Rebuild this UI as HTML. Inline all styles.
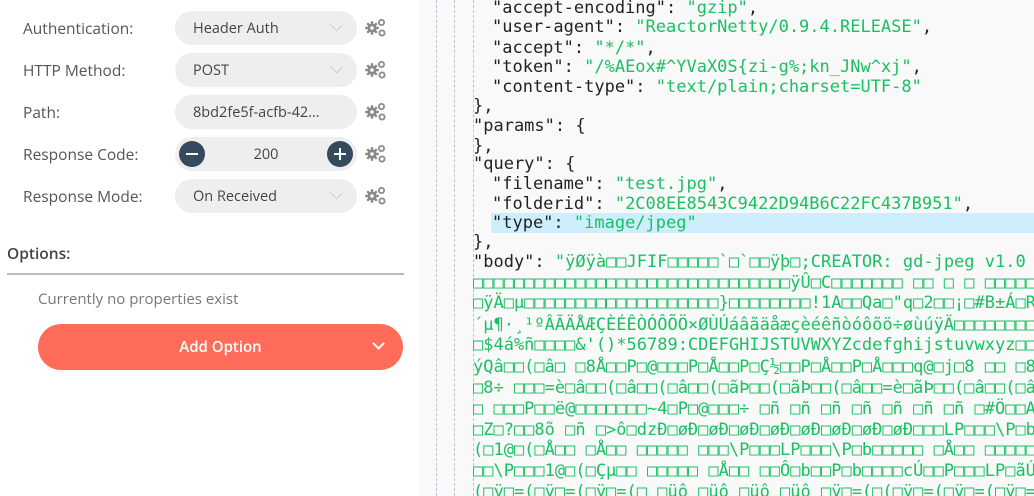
<!DOCTYPE html>
<html><head><meta charset="utf-8"><style>
*{margin:0;padding:0;box-sizing:border-box}
body{width:1034px;height:496px;overflow:hidden;background:#fff;position:relative;font-family:"Open Sans","Liberation Sans",sans-serif}
.lbl{position:absolute;left:23px;font-size:15.5px;color:#555}
.pill{position:absolute;left:175px;width:182px;height:34px;border-radius:17px;background:#eee;font-size:14.5px;color:#444;padding-left:18px;line-height:36px}
.chev{position:absolute;right:16px;top:9px;width:10px;height:10px;border-right:1px solid #ccc;border-bottom:1px solid #ccc;transform:rotate(45deg) scaleY(0.8)}
.gear{position:absolute;left:364px}
.rb{position:absolute;width:26px;height:26px;border-radius:50%;background:#354a5c;top:4px}
.rb::before{content:"";position:absolute;left:7px;top:12px;width:12px;height:2px;background:#fff}
.rb.p::after{content:"";position:absolute;left:12px;top:7px;width:2px;height:12px;background:#fff}
#right{position:absolute;left:419px;top:0;width:615px;height:496px;background:#f9f9f9}
.g{position:absolute;top:0;height:496px;width:0;border-left:1px dashed #b4c3d6}
.ln{position:absolute;left:0;font-family:"DejaVu Sans Mono","Liberation Mono",monospace;font-size:17px;color:#222;white-space:pre;line-height:20px}
.s{color:#1bc063}
</style></head><body>
<div class="lbl" style="top:17px">Authentication:</div>
<div class="lbl" style="top:59px">HTTP Method:</div>
<div class="lbl" style="top:101px">Path:</div>
<div class="lbl" style="top:143px">Response Code:</div>
<div class="lbl" style="top:185px">Response Mode:</div>

<div class="pill" style="top:11px">Header Auth<div class="chev"></div></div>
<div class="pill" style="top:53px">POST<div class="chev"></div></div>
<div class="pill" style="top:95px">8bd2fe5f-acfb-42...</div>
<div class="pill" style="top:137px;padding:0;text-align:center"><div class="rb" style="left:4px"></div>200<div class="rb p" style="right:4px"></div></div>
<div class="pill" style="top:179px">On Received<div class="chev"></div></div>

<svg width="0" height="0" style="position:absolute"><defs><g id="gr" fill="#8a8a8a">
<circle cx="8" cy="11" r="4.6"/><g stroke="#8a8a8a" stroke-width="2.4"><line x1="8" y1="4.2" x2="8" y2="17.8"/><line x1="1.2" y1="11" x2="14.8" y2="11"/><line x1="3.2" y1="6.2" x2="12.8" y2="15.8"/><line x1="12.8" y1="6.2" x2="3.2" y2="15.8"/></g><circle cx="8" cy="11" r="1.8" fill="#fff"/>
<circle cx="17.5" cy="5.5" r="2.6" fill="none" stroke="#8a8a8a" stroke-width="1.8"/><circle cx="18" cy="16" r="2.6" fill="none" stroke="#8a8a8a" stroke-width="1.8"/></g></defs></svg>
<svg class="gear" style="top:17px" width="24" height="22"><use href="#gr"/></svg>
<svg class="gear" style="top:59px" width="24" height="22"><use href="#gr"/></svg>
<svg class="gear" style="top:101px" width="24" height="22"><use href="#gr"/></svg>
<svg class="gear" style="top:143px" width="24" height="22"><use href="#gr"/></svg>
<svg class="gear" style="top:185px" width="24" height="22"><use href="#gr"/></svg>

<div style="position:absolute;left:7px;top:242px;font-size:15.5px;font-weight:600;color:#444">Options:</div>
<div style="position:absolute;left:7px;top:273px;width:397px;height:2px;background:#bbb"></div>
<div style="position:absolute;left:38px;top:289px;font-size:15px;color:#777">Currently no properties exist</div>
<div style="position:absolute;left:38px;top:324px;width:365px;height:46px;border-radius:23px;background:#ff6d5a;color:#fff;font-size:15px;font-weight:600;text-align:center;line-height:46px">Add Option<div style="position:absolute;right:20px;top:15px;width:9px;height:9px;border-right:2px solid #fff;border-bottom:2px solid #fff;transform:rotate(45deg)"></div></div>

<div id="right">
<div class="g" style="left:17px"></div><div class="g" style="left:35px"></div><div class="g" style="left:54px"></div>
<div style="position:absolute;left:72px;top:213px;width:543px;height:20px;background:#cdeefd"></div>
<div style="position:absolute;left:0;top:0;width:615px;height:496px;overflow:hidden">
<div class="ln" style="top:-2px;left:73px">"accept-encoding": <span class="s">"gzip"</span>,</div>
<div class="ln" style="top:17px;left:73px">"user-agent": <span class="s">"ReactorNetty/0.9.4.RELEASE"</span>,</div>
<div class="ln" style="top:38px;left:73px">"accept": <span class="s">"*/*"</span>,</div>
<div class="ln" style="top:57px;left:73px">"token": <span class="s">"/%AEox#^YVaX0S{zi-g%;kn_JNw^xj"</span>,</div>
<div class="ln" style="top:77px;left:73px">"content-type": <span class="s">"text/plain;charset=UTF-8"</span></div>
<div class="ln" style="top:96px;left:54px">},</div>
<div class="ln" style="top:116px;left:54px">"params": {</div>
<div class="ln" style="top:136px;left:54px">},</div>
<div class="ln" style="top:154px;left:54px">"query": {</div>
<div class="ln" style="top:174px;left:73px">"filename": <span class="s">"test.jpg"</span>,</div>
<div class="ln" style="top:194px;left:73px">"folderid": <span class="s">"2C08EE8543C9422D94B6C22FC437B951"</span>,</div>
<div class="ln" style="top:213px;left:73px">"type": <span class="s">"image/jpeg"</span></div>
<div class="ln" style="top:232px;left:54px">},</div>
<div class="ln" style="top:252px;left:54px">"body": <span class="s">"ÿØÿà□□JFIF□□□□□`□`□□ÿþ□;CREATOR: gd-jpeg v1.0 (using</span></div>
<div class="ln s" style="top:273px;left:54px">□□□□□□□□□□□□□□□□□□□□□□□□□□□□□□□ÿÛ□C□□□□□□□ □□ □ □ □□□□□□□□□□□□</div>
<div class="ln s" style="top:293px;left:54px">□ÿÄ□µ□□□□□□□□□□□□□□□□□□□}□□□□□□□□!1A□□Qa□"q□2□□¡□#B±Á□RÑð$□□</div>
<div class="ln s" style="top:315px;left:54px">´µ¶·¸¹ºÂÃÄÅÆÇÈÉÊÒÓÔÕÖ×ØÙÚáâãäåæçèéêñòóôõö÷øùúÿÄ□□□□□□□□□□□</div>
<div class="ln s" style="top:335px;left:54px">□$4á%ñ□□□□&amp;'()*56789:CDEFGHIJSTUVWXYZcdefghijstuvwxyz□□□□</div>
<div class="ln s" style="top:357px;left:54px">ýQâ□□(□â□ □8Å□□P□@□□□P□Å□□P□Ç½□□P□Å□□P□Å□□□q@□j□8 □□ □8□</div>
<div class="ln s" style="top:378px;left:54px">□8÷ □□□=è□â□□(□â□□(□â□□(□ãÞ□□(□ãÞ□□(□â□□=è□ãÞ□□(□â□□(□â□</div>
<div class="ln s" style="top:399px;left:54px">□ □□□P□□ë@□□□□□□□~4□P□@□□□÷ □ñ □ñ □ñ □ñ □ñ □ñ □ñ □#Ö□□A□□</div>
<div class="ln s" style="top:420px;left:54px">□Z□?□□8õ □ñ □>ô□dzÐ□øÐ□øÐ□øÐ□øÐ□øÐ□øÐ□øÐ□øÐ□□□LP□□□\P□b□□</div>
<div class="ln s" style="top:440px;left:54px">(□1@□(□Å□□ □Å□□ □□□□□ □□□\P□□□LP□□□\P□b□□□□□ □Å□□ □□□□□ □□</div>
<div class="ln s" style="top:461px;left:54px">□□\P□□□1@□(□Çµ□□ □□□□□ □Å□□ □□Ô□b□□P□b□□□□cÚ□□P□□□LP□ãÚ□□</div>
<div class="ln s" style="top:482px;left:54px">(□ÿ□=(□ÿ□=(□ÿ□=(□ □üô □üô □üô □üô □ÿ□=(□(□ÿ□=(□ÿ□=(□ÿ□=(□</div>
</div>
</div>
</body></html>
